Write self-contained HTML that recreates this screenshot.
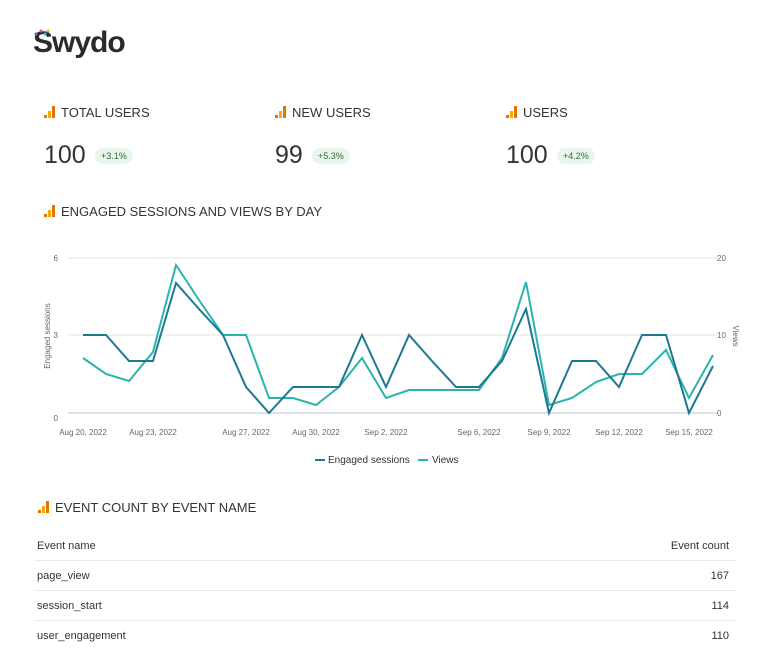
<!DOCTYPE html>
<html><head><meta charset="utf-8"><style>
body{margin:0;width:768px;height:649px;background:#fff;font-family:"Liberation Sans",sans-serif;color:#333;position:relative;overflow:hidden}
.a{position:absolute;white-space:nowrap}
.h{font-size:13px;color:#333}
.big{font-size:25px;color:#333}
.pill{font-size:9px;background:#e8f6ec;color:#2f6b3a;border-radius:10px;padding:3px 6px}
.ic{display:inline-block;vertical-align:-1px;margin-right:5px}
.tbl{font-family:"Liberation Sans Narrow","Liberation Sans",sans-serif;font-size:11px;color:#333}
.line{position:absolute;left:34px;width:702px;height:1px;background:#eaeaea}
</style></head><body>
<div class="a" style="left:33px;top:26px;font-size:30px;font-weight:bold;color:#2b2b2b;letter-spacing:-1px">Swydo</div>
<svg class="a" style="left:33px;top:28px" width="18" height="10"><circle cx="3" cy="6" r="1.5" fill="#7b5cd6"/><circle cx="8" cy="3" r="1.5" fill="#e84b8a"/><circle cx="12" cy="6" r="1.5" fill="#3cb6e0"/><circle cx="15" cy="3" r="1.5" fill="#f2b21b"/></svg>

<div class="a h" style="left:44px;top:105px"><svg class="ic" width="12" height="12"><rect x="0" y="9" width="3" height="3" fill="#e37400"/><rect x="4" y="5" width="3" height="7" fill="#f9ab00"/><rect x="8" y="0" width="3" height="12" fill="#e37400"/></svg>TOTAL USERS</div>
<div class="a big" style="left:44px;top:141px">100</div>
<div class="a pill" style="left:95px;top:148px">+3.1%</div>

<div class="a h" style="left:275px;top:105px"><svg class="ic" width="12" height="12"><rect x="0" y="9" width="3" height="3" fill="#e37400"/><rect x="4" y="5" width="3" height="7" fill="#f9ab00"/><rect x="8" y="0" width="3" height="12" fill="#e37400"/></svg>NEW USERS</div>
<div class="a big" style="left:275px;top:141px">99</div>
<div class="a pill" style="left:312px;top:148px">+5.3%</div>

<div class="a h" style="left:506px;top:105px"><svg class="ic" width="12" height="12"><rect x="0" y="9" width="3" height="3" fill="#e37400"/><rect x="4" y="5" width="3" height="7" fill="#f9ab00"/><rect x="8" y="0" width="3" height="12" fill="#e37400"/></svg>USERS</div>
<div class="a big" style="left:506px;top:141px">100</div>
<div class="a pill" style="left:557px;top:148px">+4.2%</div>

<div class="a h" style="left:44px;top:204px"><svg class="ic" width="12" height="12"><rect x="0" y="9" width="3" height="3" fill="#e37400"/><rect x="4" y="5" width="3" height="7" fill="#f9ab00"/><rect x="8" y="0" width="3" height="12" fill="#e37400"/></svg>ENGAGED SESSIONS AND VIEWS BY DAY</div>

<svg class="a" style="left:0;top:0" width="768" height="649" font-family="Liberation Sans Narrow, Liberation Sans, sans-serif">
<line x1="68" y1="258" x2="718" y2="258" stroke="#e3e3e3"/>
<line x1="68" y1="335" x2="718" y2="335" stroke="#e3e3e3"/>
<line x1="68" y1="413" x2="718" y2="413" stroke="#b8c4cc"/>
<g font-size="8" fill="#666">
<text x="58" y="261" text-anchor="end">6</text><text x="58" y="338" text-anchor="end">3</text><text x="58" y="421" text-anchor="end">0</text>
<text x="717" y="261">20</text><text x="717" y="338">10</text><text x="717" y="416">0</text>
<text x="83" y="435" text-anchor="middle">Aug 20, 2022</text><text x="153" y="435" text-anchor="middle">Aug 23, 2022</text><text x="246" y="435" text-anchor="middle">Aug 27, 2022</text><text x="316" y="435" text-anchor="middle">Aug 30, 2022</text><text x="386" y="435" text-anchor="middle">Sep 2, 2022</text><text x="479" y="435" text-anchor="middle">Sep 6, 2022</text><text x="549" y="435" text-anchor="middle">Sep 9, 2022</text><text x="619" y="435" text-anchor="middle">Sep 12, 2022</text><text x="689" y="435" text-anchor="middle">Sep 15, 2022</text>
<text transform="translate(50,336) rotate(-90)" text-anchor="middle">Engaged sessions</text>
<text transform="translate(733,336) rotate(90)" text-anchor="middle">Views</text>
</g>
<polyline fill="none" stroke="#2bb3ad" stroke-width="2" points="83,358 106,374 129,381 153,352 176,265 199,300 223,335 246,335 269,398 293,398 316,405 339,387 362,358 386,398 409,390 432,390 456,390 479,390 502,358 526,282 549,405 572,398 596,382 619,374 642,374 666,350 689,398 713,355"/>
<polyline fill="none" stroke="#1d7891" stroke-width="2" points="83,335 106,335 129,361 153,361 176,283 199,309 223,335 246,387 269,413 293,387 316,387 339,387 362,335 386,387 409,335 432,361 456,387 479,387 502,361 526,309 549,413 572,361 596,361 619,387 642,335 666,335 689,413 713,366"/>
<line x1="315" y1="460" x2="325" y2="460" stroke="#1d7891" stroke-width="2"/>
<text x="328" y="463" font-size="10" fill="#333">Engaged sessions</text>
<line x1="418" y1="460" x2="428" y2="460" stroke="#2bb3ad" stroke-width="2"/>
<text x="432" y="463" font-size="10" fill="#333">Views</text>
</svg>

<div class="a h" style="left:38px;top:500px"><svg class="ic" width="12" height="12"><rect x="0" y="9" width="3" height="3" fill="#e37400"/><rect x="4" y="5" width="3" height="7" fill="#f9ab00"/><rect x="8" y="0" width="3" height="12" fill="#e37400"/></svg>EVENT COUNT BY EVENT NAME</div>
<div class="a tbl" style="left:37px;top:540px">Event name</div>
<div class="a tbl" style="right:39px;top:540px">Event count</div>
<div class="line" style="top:560px"></div>
<div class="a tbl" style="left:37px;top:570px">page_view</div>
<div class="a tbl" style="right:39px;top:570px">167</div>
<div class="line" style="top:590px"></div>
<div class="a tbl" style="left:37px;top:600px">session_start</div>
<div class="a tbl" style="right:39px;top:600px">114</div>
<div class="line" style="top:620px"></div>
<div class="a tbl" style="left:37px;top:630px">user_engagement</div>
<div class="a tbl" style="right:39px;top:630px">110</div>
</body></html>
